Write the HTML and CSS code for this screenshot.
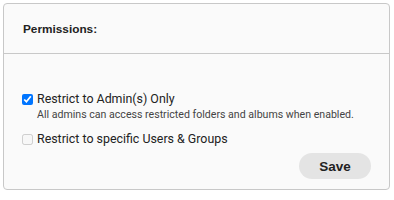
FILE: index.html
```html
<!DOCTYPE html>
<html lang="en">
<head>
    <meta charset="UTF-8">
    <title>Permissions</title>
    <link rel="stylesheet" href="styles.css">
</head>
<body>
    <div class="card">
        <div class="card-header">Permissions:</div>
        <div class="card-body">
            <label class="option">
                <input type="checkbox" checked>
                <span class="option-text">
                    <span class="option-label">Restrict to Admin(s) Only</span>
                    <span class="option-help">All admins can access restricted folders and albums when enabled.</span>
                </span>
            </label>
            <label class="option">
                <input type="checkbox" disabled>
                <span class="option-text">
                    <span class="option-label">Restrict to specific Users &amp; Groups</span>
                </span>
            </label>
            <div class="actions">
                <button class="btn-save">Save</button>
            </div>
        </div>
    </div>
</body>
</html>
```

FILE: styles.css
```css
body {
    margin: 3px;
    background: #fff;
    font-family: Roboto, "Liberation Sans", sans-serif;
    color: #222;
}

.card {
    width: 385px;
    height: 185px;
    border: 1px solid #c8c8c8;
    border-radius: 4px;
    background: #fafafa;
}

.card-header {
    height: 49px;
    padding-left: 19px;
    display: flex;
    align-items: center;
    font-family: "Liberation Sans", Arial, sans-serif;
    font-weight: bold;
    font-size: 11.8px;
    color: #222;
    border-bottom: 1px solid #c8c8c8;
}

.card-body {
    padding: 37px 18px 0 18px;
}

.option {
    display: flex;
    align-items: flex-start;
    margin-bottom: 9px;
}

.option input {
    width: 11px;
    height: 11px;
    margin: 3px 4px 0 0;
}

.option-text {
    display: flex;
    flex-direction: column;
}

.option-label {
    font-size: 12.4px;
    line-height: 16px;
}

.option-help {
    font-size: 10.6px;
    line-height: 15px;
    color: #444;
}

.actions {
    display: flex;
    justify-content: flex-end;
    margin-top: -3px;
}

.btn-save {
    width: 72px;
    height: 26px;
    border: none;
    border-radius: 13px;
    background: #e4e4e4;
    font-family: "Liberation Sans", Arial, sans-serif;
    font-weight: bold;
    font-size: 13.5px;
    color: #222;
}
```
